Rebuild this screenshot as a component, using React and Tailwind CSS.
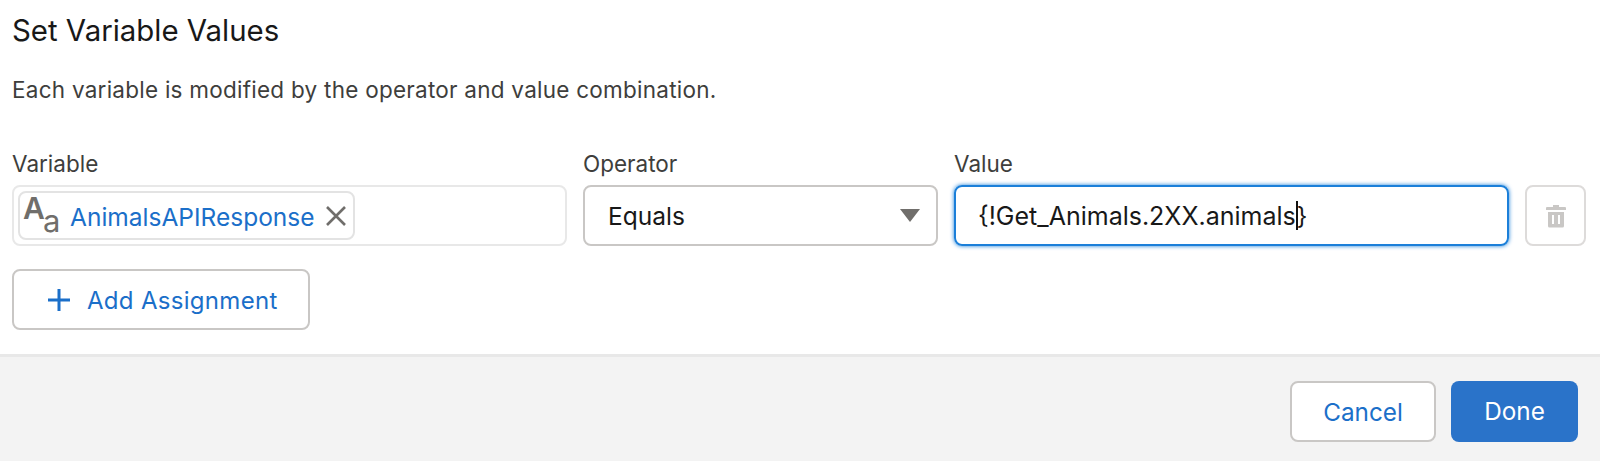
import React from 'react';

const font = { fontFamily: 'Inter, sans-serif' };

const FieldLabel = ({ children }) => (
  <p className="text-[22.5px] leading-[27px] text-[#3e3e3c] mb-[8px]">{children}</p>
);

const TrashIcon = () => (
  <svg width="22" height="24" viewBox="0 0 22 24" fill="#c9c7c5">
    <path d="M8 1h6v2h6a1 1 0 0 1 1 1v2H1V4a1 1 0 0 1 1-1h6z" />
    <path fillRule="evenodd" d="M3 8h16v14a1.5 1.5 0 0 1-1.5 1.5h-13A1.5 1.5 0 0 1 3 22zm4 3v9h2v-9zm6 0v9h2v-9z" />
  </svg>
);

const App = () => {
  return (
    <div style={font} className="w-[1600px] h-[461px] bg-white flex flex-col overflow-hidden">
      <div className="h-[354px] shrink-0 px-[12px] pt-[13px]">
        <h1 className="text-[29.4px] leading-[36px] text-[#181818]">Set Variable Values</h1>
        <p className="text-[22.5px] leading-[28px] text-[#3e3e3c] tracking-[0.25px] mt-[27px]">
          Each variable is modified by the operator and value combination.
        </p>

        <div className="flex mt-[46px] gap-[16px]">
          <div className="w-[555px]">
            <FieldLabel>Variable</FieldLabel>
            <div className="h-[61px] border-2 border-[#e8e8e8] rounded-[8px] flex items-center px-[4px]">
              <div className="h-[49px] border-2 border-[#e3e3e3] rounded-[8px] flex items-center pl-[3px] pr-[7px]">
                <span className="relative w-[39px] h-[40px] text-[#706e6b]">
                  <span className="absolute left-0 top-[-6px] text-[30px] leading-[36px] font-semibold">A</span>
                  <span className="absolute left-[20px] top-[8px] text-[31px] leading-[34px]">a</span>
                </span>
                <span className="ml-[8px] pt-[2px] text-[#1b6fc9] text-[24.5px] leading-[30px]">AnimalsAPIResponse</span>
                <svg className="ml-[11px]" width="20" height="20" viewBox="0 0 20 20" stroke="#706e6b" strokeWidth="2.6">
                  <path d="M1 1 19 19M19 1 1 19" />
                </svg>
              </div>
            </div>
          </div>

          <div className="w-[355px]">
            <FieldLabel>Operator</FieldLabel>
            <div className="h-[61px] border-2 border-[#c9c7c5] rounded-[8px] flex items-center justify-between pl-[23px] pr-[16px] text-[24.5px] text-[#181818]">
              <span className="pt-[2px]">Equals</span>
              <svg width="20" height="13" viewBox="0 0 20 13" fill="#706e6b">
                <path d="M0 0h20L10 13z" />
              </svg>
            </div>
          </div>

          <div className="w-[555px]">
            <FieldLabel>Value</FieldLabel>
            <div className="h-[61px] border-2 border-[#1b7fd9] rounded-[8px] shadow-[0_0_4px_#1b7fd9] flex items-center pl-[22px] text-[25px] text-[#181818]">
              <span className="pt-[2px]">{'{!Get_Animals.2XX.animals'}</span>
              <span className="w-[2px] h-[29px] bg-[#111111]"></span>
              <span className="-ml-[1px] pt-[2px]">{'}'}</span>
            </div>
          </div>

          <div className="self-end w-[61px] h-[61px] border-2 border-[#dddbda] rounded-[8px] flex items-center justify-center">
            <TrashIcon />
          </div>
        </div>

        <button className="mt-[23px] w-[298px] h-[61px] border-2 border-[#c9c7c5] rounded-[8px] flex items-center pl-[33px] text-[#1b6fc9] text-[24px]">
          <svg width="24" height="24" viewBox="0 0 24 24" stroke="#1b6fc9" strokeWidth="3">
            <path d="M12 1v22M1 12h22" />
          </svg>
          <span className="ml-[16px] pt-[3px] tracking-[0.3px]">Add Assignment</span>
        </button>
      </div>

      <div className="flex-1 bg-[#f3f3f3] border-t-[3px] border-[#e8e8e8] flex justify-end pt-[24px] pr-[22px] gap-[15px]">
        <button className="w-[146px] h-[61px] pt-[2px] bg-white border-2 border-[#c9c7c5] rounded-[8px] text-[#1b6fc9] text-[24.3px]">Cancel</button>
        <button className="w-[127px] h-[61px] bg-[#2a73c9] rounded-[8px] text-white text-[24.3px]">Done</button>
      </div>
    </div>
  );
};

export default App;
